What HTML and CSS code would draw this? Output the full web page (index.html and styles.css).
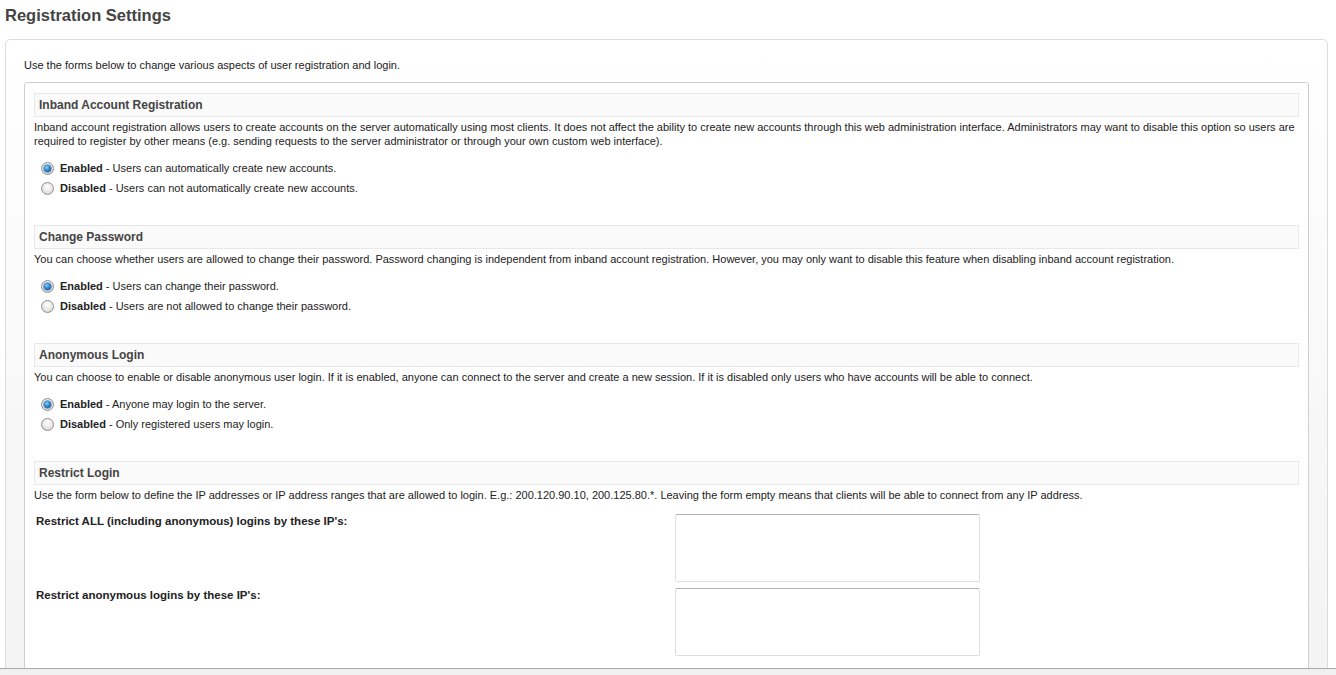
FILE: index.html
```html
<!DOCTYPE html>
<html>
<head>
<meta charset="utf-8">
<title>Registration Settings</title>
<link rel="stylesheet" href="styles.css">
</head>
<body>
<h1 class="page-title">Registration Settings</h1>
<div class="outer-panel">
  <p class="intro">Use the forms below to change various aspects of user registration and login.</p>
  <div class="inner-panel">
    <section class="section">
      <div class="section-head">Inband Account Registration</div>
      <p class="desc">Inband account registration allows users to create accounts on the server automatically using most clients. It does not affect the ability to create new accounts through this web administration interface. Administrators may want to disable this option so users are required to register by other means (e.g. sending requests to the server administrator or through your own custom web interface).</p>
      <div class="options">
        <label class="opt"><input type="radio" name="inband" checked><span><b>Enabled</b> - Users can automatically create new accounts.</span></label>
        <label class="opt"><input type="radio" name="inband"><span><b>Disabled</b> - Users can not automatically create new accounts.</span></label>
      </div>
    </section>
    <section class="section">
      <div class="section-head">Change Password</div>
      <p class="desc">You can choose whether users are allowed to change their password. Password changing is independent from inband account registration. However, you may only want to disable this feature when disabling inband account registration.</p>
      <div class="options">
        <label class="opt"><input type="radio" name="pwd" checked><span><b>Enabled</b> - Users can change their password.</span></label>
        <label class="opt"><input type="radio" name="pwd"><span><b>Disabled</b> - Users are not allowed to change their password.</span></label>
      </div>
    </section>
    <section class="section">
      <div class="section-head">Anonymous Login</div>
      <p class="desc">You can choose to enable or disable anonymous user login. If it is enabled, anyone can connect to the server and create a new session. If it is disabled only users who have accounts will be able to connect.</p>
      <div class="options">
        <label class="opt"><input type="radio" name="anon" checked><span><b>Enabled</b> - Anyone may login to the server.</span></label>
        <label class="opt"><input type="radio" name="anon"><span><b>Disabled</b> - Only registered users may login.</span></label>
      </div>
    </section>
    <section class="section">
      <div class="section-head">Restrict Login</div>
      <p class="desc">Use the form below to define the IP addresses or IP address ranges that are allowed to login. E.g.: 200.120.90.10, 200.125.80.*. Leaving the form empty means that clients will be able to connect from any IP address.</p>
      <div class="restrict">
        <div class="restrict-label">Restrict ALL (including anonymous) logins by these IP's:</div>
        <textarea class="ip-box"></textarea>
        <div class="restrict-label">Restrict anonymous logins by these IP's:</div>
        <textarea class="ip-box"></textarea>
      </div>
    </section>
  </div>
</div>
<div class="status-bar"></div>
</body>
</html>
```
FILE: styles.css
```css
html, body {
  margin: 0;
  padding: 0;
  background: #fff;
}
body {
  padding: 0 8px 0 5px;
  font-family: "Liberation Sans", Arial, sans-serif;
  font-size: 11px;
  color: #222;
  overflow: hidden;
}
.page-title {
  margin: 5px 0 14px 0;
  font-size: 16.5px;
  line-height: 20px;
  font-weight: bold;
  color: #444;
}
.outer-panel {
  border: 1px solid #dcdcdc;
  border-radius: 5px;
  padding: 18px 18px 40px 18px;
  background: linear-gradient(#ffffff 0%, #f6f6f6 60%, #f2f2f2 100%);
  min-height: 700px;
}
.intro {
  margin: 0 0 10px 0;
  line-height: 14px;
}
.inner-panel {
  border: 1px solid #cfcfcf;
  border-radius: 3px;
  background: #fff;
  padding: 10px 9px 20px 9px;
}
.section {
  margin-bottom: 27px;
}
.section-head {
  border: 1px solid #e8e8e8;
  background: #fafafa;
  height: 22px;
  line-height: 22px;
  padding-left: 4px;
  font-size: 12px;
  font-weight: bold;
  color: #444;
}
.desc {
  margin: 3px 0 0 0;
  line-height: 14px;
}
.options {
  margin-top: 10px;
  display: flex;
  flex-direction: column;
}
.opt {
  display: flex;
  align-items: center;
  height: 20px;
  padding-left: 7px;
  gap: 6px;
}
.opt b {
  color: #222;
}
.opt input {
  appearance: none;
  -webkit-appearance: none;
  margin: 0;
  width: 13px;
  height: 13px;
  border-radius: 50%;
  border: 1px solid #8f8f8f;
  background: radial-gradient(circle at 50% 35%, #ffffff 0%, #e6e6e6 55%, #cfcfcf 100%);
  box-sizing: border-box;
  display: grid;
  place-items: center;
}
.opt input:checked::before {
  content: "";
  width: 7px;
  height: 7px;
  border-radius: 50%;
  background: radial-gradient(circle at 40% 35%, #8fd0ff 0%, #2f86d0 45%, #0d4a86 100%);
  box-shadow: 0 0 0 0.5px #1a4f80;
}
.restrict {
  margin-top: 12px;
  display: grid;
  grid-template-columns: 641px 305px;
  row-gap: 6px;
}
.restrict-label {
  padding-left: 2px;
  font-size: 11.5px;
  font-weight: bold;
  line-height: 14px;
  color: #222;
}
.ip-box {
  width: 305px;
  height: 68px;
  box-sizing: border-box;
  margin: 0;
  border: 1px solid #dedede;
  border-top-color: #b0b0b0;
  border-radius: 2px;
  resize: none;
  background: #fff;
  font-family: "Liberation Sans", Arial, sans-serif;
}
.status-bar {
  position: fixed;
  left: 0;
  right: 0;
  bottom: 0;
  height: 6px;
  border-top: 1px solid #a8a8a8;
  background: #f0f0f0;
}
```
